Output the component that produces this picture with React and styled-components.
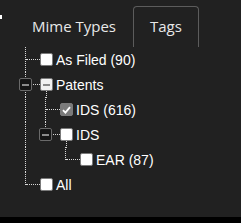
import React from 'react';
import styled, { createGlobalStyle, css } from 'styled-components';

const GlobalStyle = createGlobalStyle`
  html, body {
    margin: 0;
    padding: 0;
    background: #000;
  }
`;

const Panel = styled.div`
  position: relative;
  width: 241px;
  height: 217px;
  background-color: #212121;
  color: #fff;
  overflow: hidden;
`;

const EdgeMark = styled.span`
  position: absolute;
  left: 0;
  top: 15px;
  width: 2px;
  height: 4px;
  background: #fff;
`;

const TabBar = styled.div`
  display: flex;
  align-items: flex-end;
  height: 47px;
  padding-left: 15px;
`;

const Tab = styled.div`
  height: 41px;
  box-sizing: border-box;
  display: flex;
  align-items: center;
  padding: 0 16px 2px;
  font-family: 'Open Sans', sans-serif;
  font-size: 15px;
  color: #e8e8e8;
  border: 1px solid transparent;
  border-bottom: none;
  border-radius: 4px 4px 0 0;
  ${(p) =>
    p.$active &&
    css`
      border-color: #5c5c5c;
    `}
`;

const Tree = styled.ul`
  list-style: none;
  margin: 0;
  padding: 0 0 0 15px;
  font-family: 'Liberation Sans', Arial, sans-serif;
  font-size: 14px;
`;

const Row = styled.li`
  display: flex;
  align-items: center;
  height: 25px;
`;

const Guide = styled.span`
  position: relative;
  width: 20px;
  align-self: stretch;
  flex: none;
  ${(p) =>
    p.$line &&
    css`
      &::before {
        content: '';
        position: absolute;
        left: 10px;
        top: 0;
        bottom: 0;
        border-left: 1px dotted #d8d8d8;
      }
    `}
`;

const Connector = styled.span`
  position: relative;
  width: 25px;
  align-self: stretch;
  flex: none;
  display: flex;
  align-items: center;
  &::before {
    content: '';
    position: absolute;
    left: 10px;
    top: 0;
    bottom: ${(p) => (p.$last ? '12px' : '0')};
    border-left: 1px dotted #d8d8d8;
  }
  &::after {
    content: '';
    position: absolute;
    left: 11px;
    right: 0;
    top: 12px;
    border-top: 1px dotted #d8d8d8;
  }
`;

const Expander = styled.span`
  position: relative;
  z-index: 1;
  margin-left: 4px;
  width: 13px;
  height: 13px;
  box-sizing: border-box;
  background: #151515;
  border: 1px solid #6a6a6a;
  border-radius: 2px;
  display: flex;
  align-items: center;
  justify-content: center;
  &::before {
    content: '';
    width: 7px;
    height: 2px;
    background: #8a8a8a;
  }
`;

const Box = styled.span`
  position: relative;
  flex: none;
  width: 13px;
  height: 13px;
  box-sizing: border-box;
  border: 1px solid #7a7a7a;
  border-radius: 2px;
  background: ${(p) => (p.$state === 'checked' ? '#7a7a7a' : p.$state === 'mixed' ? '#f2f2f2' : '#fff')};
  display: flex;
  align-items: center;
  justify-content: center;
  ${(p) =>
    p.$state === 'mixed' &&
    css`
      &::before {
        content: '';
        width: 7px;
        height: 2px;
        background: #8a8a8a;
      }
    `}
  ${(p) =>
    p.$open &&
    css`
      &::after {
        content: '';
        position: absolute;
        left: 5px;
        top: 12px;
        height: 7px;
        border-left: 1px dotted #d8d8d8;
      }
    `}
`;

const Label = styled.span`
  margin-left: 3px;
  white-space: nowrap;
  color: #fff;
`;

const Check = () => (
  <svg width="9" height="8" viewBox="0 0 9 8">
    <path d="M1 4.2 L3.4 6.6 L8 1.2" fill="none" stroke="#fff" strokeWidth="1.8" />
  </svg>
);

const rows = [
  { label: 'As Filed (90)', guides: [], state: 'empty' },
  { label: 'Patents', guides: [], state: 'mixed', expander: true, open: true },
  { label: 'IDS (616)', guides: [true], state: 'checked' },
  { label: 'IDS', guides: [true], state: 'empty', expander: true, open: true, last: true },
  { label: 'EAR (87)', guides: [true, false], state: 'empty', last: true },
  { label: 'All', guides: [], state: 'empty', last: true },
];

const App = () => {
  return (
    <>
      <GlobalStyle />
      <Panel>
        <EdgeMark />
        <TabBar>
          <Tab>Mime Types</Tab>
          <Tab $active>Tags</Tab>
        </TabBar>
        <Tree>
          {rows.map((r, i) => (
            <Row key={i}>
              {r.guides.map((g, j) => (
                <Guide key={j} $line={g} />
              ))}
              <Connector $last={r.last}>{r.expander && <Expander />}</Connector>
              <Box $state={r.state} $open={r.open}>
                {r.state === 'checked' && <Check />}
              </Box>
              <Label>{r.label}</Label>
            </Row>
          ))}
        </Tree>
      </Panel>
    </>
  );
};

export default App;
